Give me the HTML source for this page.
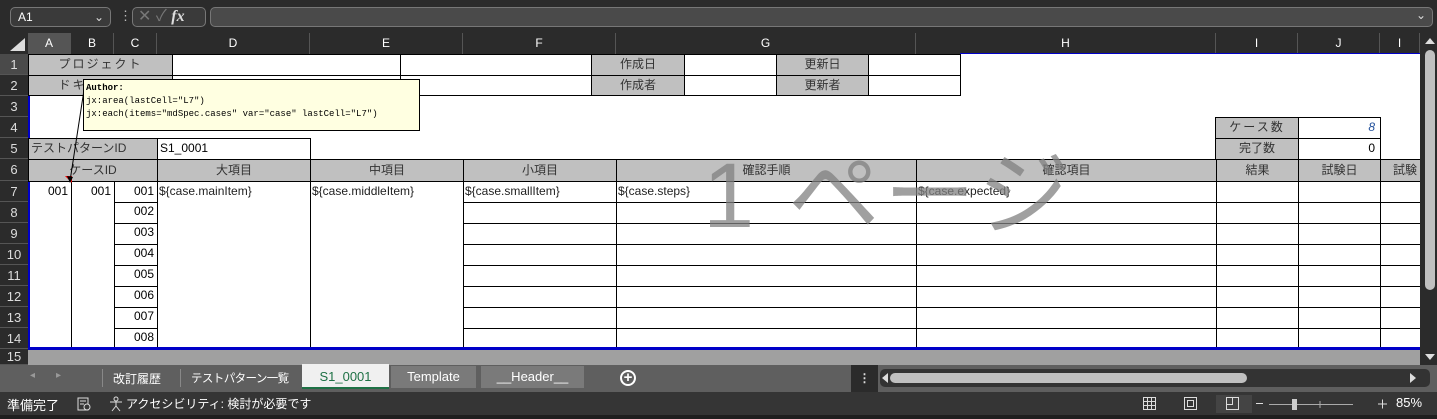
<!DOCTYPE html>
<html><head><meta charset="utf-8"><style>
*{margin:0;padding:0;box-sizing:border-box}
body{width:1437px;height:419px;overflow:hidden;background:#2b2b2b;font-family:"Liberation Sans","Noto Sans CJK JP",sans-serif;font-size:12px;position:relative}
.a{position:absolute}
.c{position:absolute;border:1px solid #000;background:#fff;color:#000;font-size:12px;line-height:19px;white-space:nowrap;overflow:hidden}
.g{background:#c0c0c0;text-align:center;color:#333}
.ch{position:absolute;top:33px;height:21px;color:#fff;text-align:center;line-height:21px;border-right:1px solid #555;font-size:12px}
.rh{position:absolute;left:0;width:28px;color:#ddd;text-align:center;font-size:13px;border-bottom:1px solid #555;background:#2b2b2b}
.v{position:absolute;width:1px;background:#000}
.h{position:absolute;height:1px;background:#000}
</style></head><body>
<!-- formula bar -->
<div class="a" style="left:10px;top:7px;width:101px;height:20px;border:1px solid #777;border-radius:5px;background:#3a3a3a;color:#fff;line-height:18px;padding-left:7px;font-size:12px">A1<span style="position:absolute;right:6px;top:0;color:#ddd">&#8964;</span></div>
<div class="a" style="left:119px;top:8px;color:#bbb;font-size:13px">⋮</div>
<div class="a" style="left:132px;top:7px;width:74px;height:20px;border:1px solid #777;border-radius:5px;background:#3a3a3a;color:#777;font-size:16px;line-height:18px;padding-left:5px">✕ ✓ <i style="color:#ddd;font-family:'Liberation Serif',serif;font-weight:bold">fx</i></div>
<div class="a" style="left:210px;top:7px;width:1223px;height:20px;border:1px solid #777;border-radius:5px;background:#4a4a4a"><span style="position:absolute;right:6px;top:0;color:#ddd">&#8964;</span></div>
<!-- col headers -->
<div class="a" style="left:0;top:33px;width:28px;height:21px;background:#2b2b2b"><div class="a" style="left:10px;top:5px;width:0;height:0;border-left:15px solid transparent;border-bottom:13px solid #ddd"></div></div>
<div class="ch" style="left:28px;width:43px;background:#555">A</div>
<div class="ch" style="left:71px;width:43px">B</div>
<div class="ch" style="left:114px;width:43px">C</div>
<div class="ch" style="left:157px;width:153px">D</div>
<div class="ch" style="left:310px;width:153px">E</div>
<div class="ch" style="left:463px;width:153px">F</div>
<div class="ch" style="left:616px;width:300px">G</div>
<div class="ch" style="left:916px;width:300px">H</div>
<div class="ch" style="left:1216px;width:82px">I</div>
<div class="ch" style="left:1298px;width:82px">J</div>
<div class="ch" style="left:1380px;width:40px">I</div>
<!-- sheet area -->
<div class="a" style="left:28px;top:54px;width:1392px;height:310px;background:#fff"></div>
<div class="a" style="left:28px;top:350px;width:1392px;height:15px;background:#a0a0a0"></div>
<div class="a" style="left:28px;top:347px;width:1392px;height:3px;background:#0000c8"></div>
<div class="a" style="left:28px;top:54px;width:2px;height:296px;background:#0000c8"></div>
<div class="a" style="left:28px;top:54px;width:2px;height:20px;background:#1e7145"></div>
<div class="a" style="left:960px;top:53px;width:460px;height:1px;background:#0000c8"></div>
<!-- row headers -->
<div class="rh" style="top:54px;height:21px;line-height:21px;background:#4a4a4a">1</div>
<div class="rh" style="top:75px;height:21px;line-height:21px">2</div>
<div class="rh" style="top:96px;height:21px;line-height:21px">3</div>
<div class="rh" style="top:117px;height:21px;line-height:21px">4</div>
<div class="rh" style="top:138px;height:21px;line-height:21px">5</div>
<div class="rh" style="top:159px;height:22px;line-height:22px">6</div>
<div class="rh" style="top:181px;height:21px;line-height:21px">7</div>
<div class="rh" style="top:202px;height:21px;line-height:21px">8</div>
<div class="rh" style="top:223px;height:21px;line-height:21px">9</div>
<div class="rh" style="top:244px;height:21px;line-height:21px">10</div>
<div class="rh" style="top:265px;height:21px;line-height:21px">11</div>
<div class="rh" style="top:286px;height:21px;line-height:21px">12</div>
<div class="rh" style="top:307px;height:21px;line-height:21px">13</div>
<div class="rh" style="top:328px;height:21px;line-height:21px">14</div>
<div class="rh" style="top:349px;height:16px;line-height:16px">15</div>
<!-- rows 1-2 -->
<div class="c g" style="left:28px;top:54px;width:145px;height:22px;letter-spacing:2px">プロジェクト</div>
<div class="c" style="left:172px;top:54px;width:229px;height:22px"></div>
<div class="c" style="left:400px;top:54px;width:192px;height:22px"></div>
<div class="c g" style="left:591px;top:54px;width:94px;height:22px">作成日</div>
<div class="c" style="left:684px;top:54px;width:93px;height:22px"></div>
<div class="c g" style="left:776px;top:54px;width:93px;height:22px">更新日</div>
<div class="c" style="left:868px;top:54px;width:93px;height:22px"></div>
<div class="c g" style="left:28px;top:75px;width:145px;height:21px;letter-spacing:2px">ドキュメント</div>
<div class="c" style="left:172px;top:75px;width:229px;height:21px"></div>
<div class="c" style="left:400px;top:75px;width:192px;height:21px"></div>
<div class="c g" style="left:591px;top:75px;width:94px;height:21px">作成者</div>
<div class="c" style="left:684px;top:75px;width:93px;height:21px"></div>
<div class="c g" style="left:776px;top:75px;width:93px;height:21px">更新者</div>
<div class="c" style="left:868px;top:75px;width:93px;height:21px"></div>
<!-- row 4-5 right -->
<div class="c g" style="left:1215px;top:117px;width:84px;height:22px;letter-spacing:2px">ケース数</div>
<div class="c" style="left:1298px;top:117px;width:83px;height:22px;text-align:right;padding-right:5px;font-style:italic;color:#1f4e9a">8</div>
<div class="c g" style="left:1215px;top:138px;width:84px;height:22px">完了数</div>
<div class="c" style="left:1298px;top:138px;width:83px;height:22px;text-align:right;padding-right:5px">0</div>
<div class="c g" style="left:28px;top:138px;width:130px;height:22px;text-align:left;padding-left:2px">テストパターンID</div>
<div class="c" style="left:157px;top:138px;width:154px;height:22px;padding-left:2px">S1_0001</div>
<!-- row 6 header -->
<div class="c g" style="left:28px;top:159px;width:130px;height:23px;line-height:21px">ケースID</div>
<div class="c g" style="left:157px;top:159px;width:154px;height:23px;line-height:21px">大項目</div>
<div class="c g" style="left:310px;top:159px;width:154px;height:23px;line-height:21px">中項目</div>
<div class="c g" style="left:463px;top:159px;width:154px;height:23px;line-height:21px">小項目</div>
<div class="c g" style="left:616px;top:159px;width:301px;height:23px;line-height:21px">確認手順</div>
<div class="c g" style="left:916px;top:159px;width:301px;height:23px;line-height:21px">確認項目</div>
<div class="c g" style="left:1216px;top:159px;width:83px;height:23px;line-height:21px">結果</div>
<div class="c g" style="left:1298px;top:159px;width:83px;height:23px;line-height:21px">試験日</div>
<div class="c g" style="left:1380px;top:159px;width:42px;height:23px;line-height:21px;text-align:left;padding-left:12px">試験</div>
<!-- grid rows 7-14 -->
<div class="v" style="left:71px;top:181px;height:166px"></div>
<div class="v" style="left:114px;top:181px;height:166px"></div>
<div class="v" style="left:157px;top:181px;height:166px"></div>
<div class="v" style="left:310px;top:181px;height:166px"></div>
<div class="v" style="left:463px;top:181px;height:166px"></div>
<div class="v" style="left:616px;top:181px;height:166px"></div>
<div class="v" style="left:916px;top:181px;height:166px"></div>
<div class="v" style="left:1216px;top:181px;height:166px"></div>
<div class="v" style="left:1298px;top:181px;height:166px"></div>
<div class="v" style="left:1380px;top:181px;height:166px"></div>
<div class="h" style="left:114px;top:202px;width:43px"></div><div class="h" style="left:463px;top:202px;width:957px"></div>
<div class="h" style="left:114px;top:223px;width:43px"></div><div class="h" style="left:463px;top:223px;width:957px"></div>
<div class="h" style="left:114px;top:244px;width:43px"></div><div class="h" style="left:463px;top:244px;width:957px"></div>
<div class="h" style="left:114px;top:265px;width:43px"></div><div class="h" style="left:463px;top:265px;width:957px"></div>
<div class="h" style="left:114px;top:286px;width:43px"></div><div class="h" style="left:463px;top:286px;width:957px"></div>
<div class="h" style="left:114px;top:307px;width:43px"></div><div class="h" style="left:463px;top:307px;width:957px"></div>
<div class="h" style="left:114px;top:328px;width:43px"></div><div class="h" style="left:463px;top:328px;width:957px"></div>
<div class="a" style="top:182px;left:30px;width:38px;text-align:right;line-height:19px">001</div>
<div class="a" style="top:182px;left:73px;width:38px;text-align:right;line-height:19px">001</div>
<div class="a" style="top:182px;left:114px;width:40px;text-align:right;line-height:19px">001<br><span style="line-height:21px">002<br>003<br>004<br>005<br>006<br>007<br>008</span></div>
<div class="a" style="top:182px;left:159px;line-height:19px;color:#222">${case.mainItem}</div>
<div class="a" style="top:182px;left:312px;line-height:19px;color:#222">${case.middleItem}</div>
<div class="a" style="top:182px;left:465px;line-height:19px;color:#222">${case.smallItem}</div>
<div class="a" style="top:182px;left:618px;line-height:19px;color:#222">${case.steps}</div>
<div class="a" style="top:182px;left:918px;line-height:19px;color:#222">${case.expected}</div>
<div class="a" style="left:65px;top:176px;width:0;height:0;border-left:7px solid transparent;border-top:7px solid #e00"></div>
<!-- watermark -->
<div class="a" style="left:703px;top:146px;font-size:92px;line-height:100px;color:rgba(128,128,128,.75);font-weight:normal;white-space:nowrap;letter-spacing:4px">1 ページ</div>
<!-- comment -->
<svg class="a" style="left:0;top:0" width="200" height="200"><line x1="84" y1="90" x2="70" y2="181" stroke="#000" stroke-width="1"/><polygon points="70,183 67,176 73,177" fill="#000"/></svg>
<div class="a" style="left:83px;top:79px;width:337px;height:52px;background:#ffffe1;border:1px solid #000;font-family:'Liberation Mono','Noto Sans CJK JP',monospace;font-size:9px;line-height:13px;padding:2px 2px;color:#000;white-space:nowrap"><b>Author:</b><br>jx:area(lastCell="L7")<br>jx:each(items="mdSpec.cases" var="case" lastCell="L7")</div>
<!-- vertical scrollbar -->
<div class="a" style="left:1420px;top:33px;width:17px;height:332px;background:#2b2b2b"></div>
<div class="a" style="left:1425px;top:38px;width:0;height:0;border-left:5px solid transparent;border-right:5px solid transparent;border-bottom:6px solid #ddd"></div>
<div class="a" style="left:1425px;top:50px;width:10px;height:240px;background:#c0c0c0;border-radius:5px"></div>
<div class="a" style="left:1425px;top:354px;width:0;height:0;border-left:5px solid transparent;border-right:5px solid transparent;border-top:6px solid #ddd"></div>
<!-- tab bar -->
<div class="a" style="left:0;top:365px;width:1437px;height:27px;background:#5f5f5f"></div>
<div class="a" style="left:30px;top:370px;color:#999;font-size:10px">◂</div>
<div class="a" style="left:56px;top:370px;color:#999;font-size:10px">▸</div>
<div class="a" style="left:102px;top:369px;width:1px;height:18px;background:#888"></div>
<div class="a" style="left:113px;top:370px;color:#fff;font-size:12px">改訂履歴</div>
<div class="a" style="left:180px;top:369px;width:1px;height:18px;background:#888"></div>
<div class="a" style="left:191px;top:370px;color:#fff;font-size:11.5px;letter-spacing:-0.6px;white-space:nowrap">テストパターン一覧</div>
<div class="a" style="left:302px;top:364px;width:87px;height:25px;background:#f0f0f0;border-bottom:2px solid #1e7145;color:#1e7145;text-align:center;line-height:25px;font-size:13px">S1_0001</div>
<div class="a" style="left:391px;top:366px;width:85px;height:22px;background:#7a7a7a;color:#fff;text-align:center;line-height:22px;font-size:13px">Template</div>
<div class="a" style="left:481px;top:366px;width:103px;height:22px;background:#7a7a7a;color:#fff;text-align:center;line-height:22px;font-size:13px">__Header__</div>
<div class="a" style="left:620px;top:370px;width:16px;height:16px;border:2px solid #fff;border-radius:50%;color:#fff;text-align:center;line-height:11px;font-size:15px;font-weight:bold">+</div>
<div class="a" style="left:851px;top:365px;width:27px;height:27px;background:#2b2b2b;color:#ddd;text-align:center;line-height:26px;font-weight:bold">⋮</div>
<div class="a" style="left:880px;top:369px;width:550px;height:18px;background:#333;border-radius:5px"></div>
<div class="a" style="left:882px;top:373px;width:0;height:0;border-top:5px solid transparent;border-bottom:5px solid transparent;border-right:6px solid #ddd"></div>
<div class="a" style="left:890px;top:373px;width:357px;height:10px;background:#c0c0c0;border-radius:5px"></div>
<div class="a" style="left:1410px;top:373px;width:0;height:0;border-top:5px solid transparent;border-bottom:5px solid transparent;border-left:6px solid #ddd"></div>
<!-- status bar -->
<div class="a" style="left:0;top:392px;width:1437px;height:23px;background:#353535"></div>
<div class="a" style="left:0;top:415px;width:1437px;height:4px;background:#1f1f1f"></div>
<div class="a" style="left:7px;top:395px;color:#fff;font-size:13px">準備完了</div>
<svg class="a" style="left:76px;top:396px" width="16" height="16"><rect x="2" y="2" width="10" height="12" fill="none" stroke="#ddd"/><line x1="4" y1="5" x2="10" y2="5" stroke="#ddd"/><line x1="4" y1="8" x2="8" y2="8" stroke="#ddd"/><circle cx="11" cy="11" r="3" fill="#353535" stroke="#ddd"/></svg>
<svg class="a" style="left:109px;top:396px" width="16" height="16"><g fill="none" stroke="#ddd"><circle cx="7" cy="3" r="2"/><path d="M1 6 L13 6 M7 6 L7 10 L3 15 M7 10 L11 15"/></g></svg>
<div class="a" style="left:126px;top:395px;color:#fff;font-size:12px">アクセシビリティ: 検討が必要です</div>
<svg class="a" style="left:1142px;top:395px" width="300" height="18"><g fill="none" stroke="#ddd"><rect x="1.5" y="2.5" width="12" height="12"/><line x1="1.5" y1="6.5" x2="13.5" y2="6.5"/><line x1="1.5" y1="10.5" x2="13.5" y2="10.5"/><line x1="5.5" y1="2.5" x2="5.5" y2="14.5"/><line x1="9.5" y1="2.5" x2="9.5" y2="14.5"/><rect x="42.5" y="2.5" width="12" height="12"/><rect x="45.5" y="5.5" width="6" height="6"/></g><rect x="74" y="0" width="36" height="18" fill="#444"/><g fill="none" stroke="#ddd"><rect x="84.5" y="2.5" width="12" height="12"/><polyline points="84.5,9.5 90.5,9.5 90.5,2.5"/></g><line x1="114" y1="8.5" x2="121" y2="8.5" stroke="#ddd"/><line x1="127" y1="9.5" x2="211" y2="9.5" stroke="#aaa"/><rect x="150" y="4" width="5" height="11" fill="#ccc"/><line x1="178" y1="6" x2="178" y2="13" stroke="#aaa"/><line x1="236" y1="9" x2="245" y2="9" stroke="#ddd"/><line x1="240.5" y1="4.5" x2="240.5" y2="13.5" stroke="#ddd"/></svg>
<div class="a" style="left:1396px;top:395px;color:#fff;font-size:13px">85%</div>
</body></html>
